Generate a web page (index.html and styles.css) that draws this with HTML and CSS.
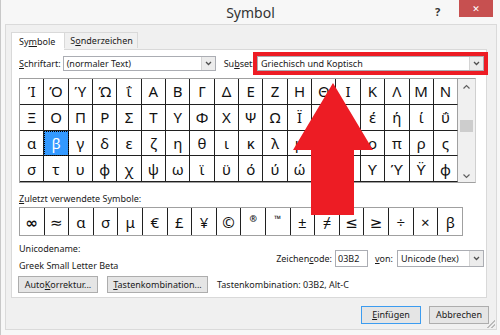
FILE: index.html
```html
<!DOCTYPE html>
<html lang="de">
<head>
    <meta charset="UTF-8">
    <title>Symbol</title>
    <link rel="stylesheet" href="styles.css">
</head>
<body>
    <div class="window">
        <div class="titlebar">
            <div class="title">Symbol</div>
            <div class="help">?</div>
            <div class="close">&#x2715;</div>
        </div>
        <div class="client">
            <div class="tabs">
                <div class="tab active">Sy<u>m</u>bole</div>
                <div class="tab">S<u>o</u>nderzeichen</div>
            </div>
            <div class="panel">
                <div class="row-font">
                    <span class="lbl"><u>S</u>chriftart:</span>
                    <div class="combo combo-font"><span>(normaler Text)</span><i class="drop"></i></div>
                    <span class="lbl lbl-subset">Su<u>b</u>set:</span>
                    <div class="combo combo-subset"><span>Griechisch und Koptisch</span><i class="drop"></i></div>
                </div>
                <div class="grid-box">
                    <div class="grid">
                        <span>Ί</span><span>Ό</span><span>Ύ</span><span>Ώ</span><span>ΐ</span><span>Α</span><span>Β</span><span>Γ</span><span>Δ</span><span>Ε</span><span>Ζ</span><span>Η</span><span>Θ</span><span>Ι</span><span>Κ</span><span>Λ</span><span>Μ</span><span>Ν</span>
                        <span>Ξ</span><span>Ο</span><span>Π</span><span>Ρ</span><span>Σ</span><span>Τ</span><span>Υ</span><span>Φ</span><span>Χ</span><span>Ψ</span><span>Ω</span><span>Ϊ</span><span>Ϋ</span><span>ά</span><span>έ</span><span>ή</span><span>ί</span><span>ΰ</span>
                        <span>α</span><span class="sel">β</span><span>γ</span><span>δ</span><span>ε</span><span>ζ</span><span>η</span><span>θ</span><span>ι</span><span>κ</span><span>λ</span><span>μ</span><span>ν</span><span>ξ</span><span>ο</span><span>π</span><span>ρ</span><span>ς</span>
                        <span>σ</span><span>τ</span><span>υ</span><span>φ</span><span>χ</span><span>ψ</span><span>ω</span><span>ϊ</span><span>ϋ</span><span>ό</span><span>ύ</span><span>ώ</span><span>ϐ</span><span>ϑ</span><span>ϒ</span><span>ϓ</span><span>ϔ</span><span>ϕ</span>
                    </div>
                    <div class="scrollbar">
                        <svg width="15" height="12" viewBox="0 0 15 12"><path d="M4.5 7.5 L7.5 4.5 L10.5 7.5" fill="none" stroke="#606060" stroke-width="1.2"/></svg>
                        <div class="track"><div class="thumb"></div></div>
                        <svg width="15" height="12" viewBox="0 0 15 12"><path d="M4.5 4.5 L7.5 7.5 L10.5 4.5" fill="none" stroke="#606060" stroke-width="1.2"/></svg>
                    </div>
                </div>
                <div class="lbl lbl-recent"><u>Z</u>uletzt verwendete Symbole:</div>
                <div class="recent">
                    <span class="bold">∞</span><span>≈</span><span>α</span><span>σ</span><span>μ</span><span>€</span><span>£</span><span>¥</span><span>©</span><span class="small">®</span><span class="small">™</span><span>±</span><span>≠</span><span>≤</span><span>≥</span><span>÷</span><span>×</span><span>β</span>
                </div>
                <div class="row-info">
                    <div class="names">
                        <div class="lbl">Unicodename:</div>
                        <div class="lbl">Greek Small Letter Beta</div>
                    </div>
                    <div class="code">
                        <span class="lbl">Zeichen<u>c</u>ode:</span>
                        <div class="input">03B2</div>
                        <span class="lbl lbl-von"><u>v</u>on:</span>
                        <div class="combo combo-von"><span>Unicode (hex)</span><i class="drop"></i></div>
                    </div>
                </div>
                <div class="row-buttons">
                    <div class="btn btn-auto">Auto<u>K</u>orrektur...</div>
                    <div class="btn btn-keys"><u>T</u>astenkombination...</div>
                    <span class="lbl">Tastenkombination: 03B2, Alt-C</span>
                </div>
            </div>
            <div class="footer">
                <div class="btn btn-default"><u>E</u>infügen</div>
                <div class="btn">Abbrechen</div>
            </div>
            <div class="grip"></div>
        </div>
    </div>
    <svg class="arrow" width="500" height="335" viewBox="0 0 500 335">
        <polygon points="333,83 373,150 354,150 354,215 311,215 311,150 293,150" fill="#ed1c24"/>
    </svg>
</body>
</html>
```

FILE: styles.css
```css
*{
    margin: 0;
    padding: 0;
    box-sizing: border-box;
}
body{
    width: 500px;
    height: 335px;
    background-color: #f7f7f7;
    font-family: "Noto Sans", "DejaVu Sans", sans-serif;
    font-size: 9px;
    color: #1a1a1a;
    position: relative;
    overflow: hidden;
}
u{
    text-decoration-thickness: 1px;
    text-underline-offset: 1px;
}
.window{
    height: 335px;
    display: flex;
    flex-direction: column;
    border-left: 1px solid #c8c8c8;
}
.titlebar{
    height: 24px;
    display: flex;
    align-items: flex-start;
}
.title{
    flex: 1;
    text-align: center;
    font-size: 14px;
    line-height: 26px;
    color: #333;
    padding-left: 65px;
}
.help{
    width: 12px;
    margin-top: 4px;
    margin-right: 12px;
    font-weight: bold;
    font-size: 11px;
    color: #333;
}
.close{
    width: 34px;
    height: 17px;
    margin-right: 7px;
    background-color: #c75050;
    color: #fff;
    font-size: 9px;
    text-align: center;
    line-height: 17px;
}
.client{
    flex: 1;
    margin: 0 3px 5px 4px;
    background-color: #f0f0f0;
    border: 1px solid #dadada;
    padding: 6px 9px 0 5px;
    position: relative;
}
.tabs{
    display: flex;
    align-items: flex-end;
    height: 18px;
    position: relative;
    z-index: 1;
}
.tab{
    height: 16px;
    padding: 0 4px 0 5px;
    border: 1px solid #d9d9d9;
    border-bottom: none;
    background-color: #f0f0f0;
    line-height: 15px;
    margin-bottom: 1px;
}
.tab.active{
    height: 18px;
    background-color: #fff;
    margin-bottom: -1px;
    padding: 0 9px 0 7px;
    line-height: 17px;
    border-right: none;
}
.panel{
    height: 249px;
    border: 1px solid #d9d9d9;
    background-color: #fff;
    padding: 6px 2px 0 7px;
}
.lbl{
    white-space: nowrap;
}
.row-font{
    display: flex;
    align-items: center;
    height: 15px;
}
.combo{
    height: 15px;
    border: 1px solid #abadb3;
    background-color: #fff;
    display: flex;
    align-items: center;
    padding-left: 3px;
}
.combo span{
    flex: 1;
    white-space: nowrap;
}
.drop{
    width: 14px;
    height: 13px;
    border-left: 1px solid #d4d4d4;
    background: #ececec url("data:image/svg+xml;utf8,<svg xmlns='http://www.w3.org/2000/svg' width='14' height='13'><path d='M4.5 5 L7 7.5 L9.5 5' fill='none' stroke='%23505050' stroke-width='1.3'/></svg>") no-repeat center;
}
.combo-font{
    width: 153px;
    margin-left: 2px;
}
.lbl-subset{
    margin-left: 8px;
}
.combo-subset{
    width: 227px;
    margin-left: auto;
    outline: 4px solid #ed1c24;
    padding-left: 3px;
}
.grid-box{
    margin-top: 7px;
    display: flex;
    width: 457px;
    border: 1px solid #a0a0a0;
    border-right-color: #d0d0d0;
}
.grid{
    display: grid;
    grid-template-columns: repeat(18, 24.35px);
    grid-auto-rows: 25.75px;
}
.grid span, .recent span{
    display: flex;
    align-items: center;
    justify-content: center;
    border-right: 1px solid #202020;
    border-bottom: 1px solid #202020;
    font-size: 15px;
    color: #111;
}
.grid span:nth-child(18n){
    border-right-color: #a0a0a0;
}
.grid .sel{
    background-color: #3399ff;
    color: #fff;
    outline: 1px dotted #000;
    outline-offset: -1px;
}
.scrollbar{
    width: 17px;
    display: flex;
    flex-direction: column;
    align-items: center;
    background-color: #f0f0f0;
    padding-top: 2px;
}
.track{
    flex: 1;
    width: 15px;
    padding-top: 27px;
}
.thumb{
    width: 13px;
    height: 12px;
    margin-left: 1px;
    background-color: #cdcdcd;
}
.lbl-recent{
    margin-top: 9px;
    height: 15px;
    line-height: 14px;
}
.recent{
    display: grid;
    grid-template-columns: repeat(18, 24.6px);
    height: 29px;
    width: 444px;
    border: 1px solid #a0a0a0;
}
.recent span{
    border-bottom: none;
}
.recent span:last-child{
    border-right: none;
}
.recent .bold{
    font-weight: bold;
}
.recent .small{
    font-size: 9px;
    padding-bottom: 6px;
    font-weight: bold;
}
.row-info{
    display: flex;
    margin-top: 6px;
}
.names{
    display: flex;
    flex-direction: column;
    gap: 3px;
    line-height: 14px;
}
.code{
    margin-left: auto;
    margin-top: 8px;
    display: flex;
    align-items: center;
    height: 17px;
}
.input{
    width: 33px;
    height: 17px;
    margin-left: 3px;
    border: 1px solid #abadb3;
    background-color: #fff;
    padding-left: 2px;
    line-height: 15px;
}
.lbl-von{
    margin-left: 7px;
}
.combo-von{
    width: 87px;
    height: 17px;
    margin-left: 4px;
}
.combo-von .drop{
    height: 15px;
}
.row-buttons{
    display: flex;
    align-items: center;
    margin-top: 3px;
    gap: 9px;
}
.btn{
    height: 17px;
    border: 1px solid #adadad;
    background-color: #e5e5e5;
    text-align: center;
    line-height: 15px;
    white-space: nowrap;
}
.btn-auto{
    width: 80px;
    margin-left: -1px;
}
.btn-keys{
    width: 101px;
}
.footer{
    display: flex;
    justify-content: flex-end;
    gap: 8px;
    margin-top: 8px;
    margin-right: -2px;
}
.footer .btn{
    width: 60px;
    height: 18px;
    line-height: 16px;
}
.footer .btn-default{
    border-color: #3c9cf0;
}
.grip{
    position: absolute;
    right: 1px;
    bottom: 1px;
    width: 8px;
    height: 8px;
    background: linear-gradient(135deg, transparent 50%, #bbb 50%, #bbb 60%, transparent 60%, transparent 75%, #bbb 75%, #bbb 85%, transparent 85%);
}
.arrow{
    position: absolute;
    left: 0;
    top: 0;
}
```
